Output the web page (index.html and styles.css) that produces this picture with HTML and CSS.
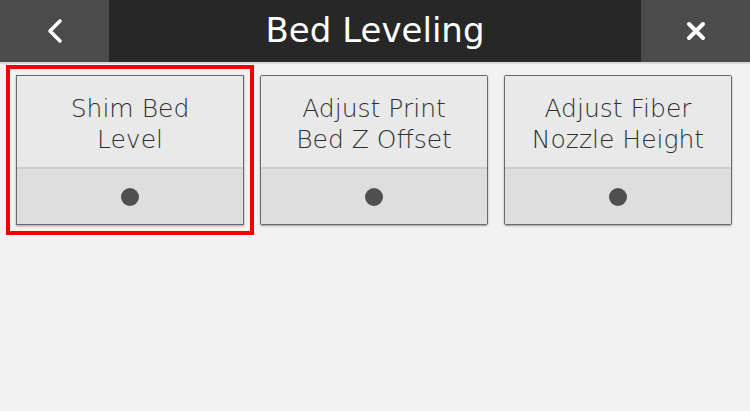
FILE: index.html
```html
<!DOCTYPE html>
<html>
<head>
<meta charset="utf-8">
<link rel="stylesheet" href="styles.css">
</head>
<body>
<div class="header">
  <div class="side">
    <svg width="20" height="26" viewBox="0 0 20 26"><path d="M15 3 L5 13 L15 23" fill="none" stroke="#fff" stroke-width="3.6" stroke-linecap="round" stroke-linejoin="round"/></svg>
  </div>
  <div class="title">Bed Leveling</div>
  <div class="side">
    <svg width="22" height="22" viewBox="0 0 22 22"><path d="M4 4 L18 18 M18 4 L4 18" fill="none" stroke="#fff" stroke-width="4" stroke-linecap="round"/></svg>
  </div>
</div>
<div class="grid">
  <div class="btn selected"><div class="label">Shim Bed<br>Level</div><div class="foot"><span class="dot"></span></div></div>
  <div class="btn"><div class="label">Adjust Print<br>Bed Z Offset</div><div class="foot"><span class="dot"></span></div></div>
  <div class="btn"><div class="label">Adjust Fiber<br>Nozzle Height</div><div class="foot"><span class="dot"></span></div></div>
</div>
</body>
</html>
```
FILE: styles.css
```css
html, body { margin: 0; padding: 0; }
body {
  width: 750px; height: 411px; overflow: hidden;
  background: #f2f2f2;
  font-family: "DejaVu Sans", sans-serif;
}
.header {
  display: flex; height: 62px; background: #272727;
  border-bottom: 2px solid #d9d9d9;
}
.side {
  width: 109px; background: #4b4b4b;
  display: flex; align-items: center; justify-content: center;
}
.title {
  flex: 1; color: #fff; font-size: 34px; text-align: center;
  line-height: 60px;
}
.grid {
  display: flex; gap: 16px; padding: 11px 0 0 16px;
}
.btn {
  height: 150px; width: 228px; box-sizing: border-box;
  border: 1px solid #6a6a6a; border-radius: 2px;
  box-shadow: 0 1px 2px rgba(0,0,0,0.35);
  display: flex; flex-direction: column;
}
.selected { outline: 4px solid #f00000; outline-offset: 6px; border-radius: 0; }
.label {
  height: 93px; background: #e9e9e9; color: #2e2e2e;
  font-size: 25px; font-weight: 200; line-height: 31px;
  padding-top: 4px; box-sizing: border-box;
  display: flex; align-items: center; justify-content: center; text-align: center;
  border-bottom: 2px solid #cdcdcd;
}
.foot {
  flex: 1; background: #dedede;
  display: flex; align-items: center; justify-content: center;
}
.dot { width: 18px; height: 18px; border-radius: 50%; background: #4f4f4f; }
```
